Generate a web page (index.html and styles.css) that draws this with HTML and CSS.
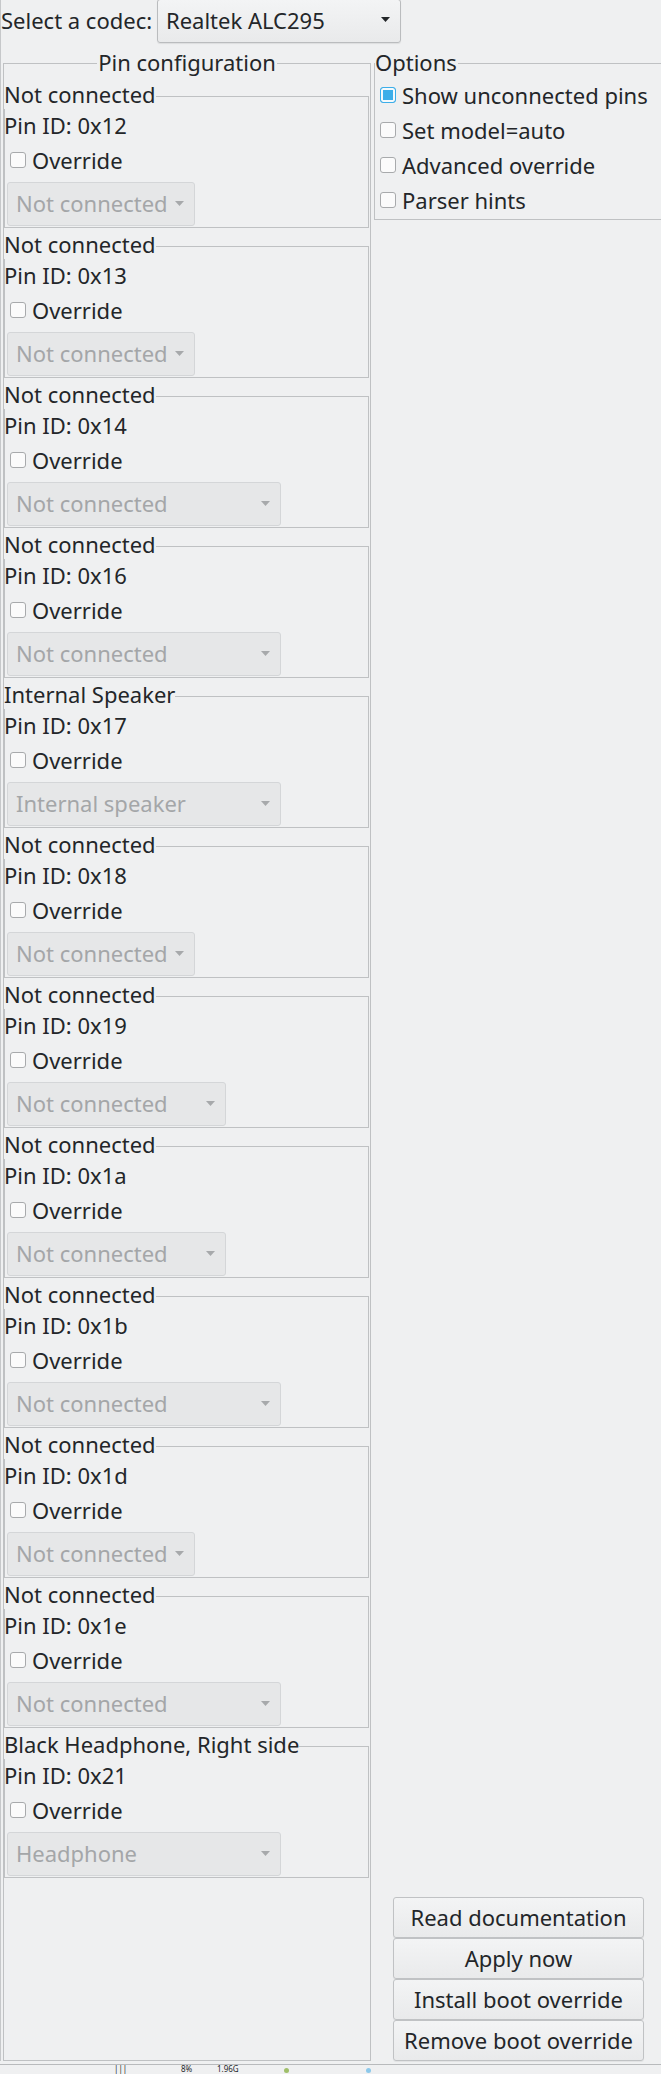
FILE: index.html
```html
<!DOCTYPE html>
<html>
<head>
<meta charset="utf-8">
<link rel="stylesheet" href="styles.css">
</head>
<body>
<div class="window">
  <div class="topbar">
    <span class="top-label">Select a codec:</span>
    <div class="combo">
      <span>Realtek ALC295</span>
      <svg class="arrow" width="9" height="5" viewBox="0 0 9 5"><path d="M0 0H9L4.5 5Z" fill="#232629"/></svg>
    </div>
  </div>
  <div class="main">
    <div class="pins">
      <div class="pins-title">Pin configuration</div>

      <div class="group">
        <div class="group-title">Not connected</div>
        <div class="pin-id">Pin ID: 0x12</div>
        <div class="override"><span class="cb"></span>Override</div>
        <div class="dcombo w-narrow"><span>Not connected</span><svg class="arrow" width="9" height="5" viewBox="0 0 9 5"><path d="M0 0H9L4.5 5Z" fill="#a7a9ab"/></svg></div>
      </div>

      <div class="group">
        <div class="group-title">Not connected</div>
        <div class="pin-id">Pin ID: 0x13</div>
        <div class="override"><span class="cb"></span>Override</div>
        <div class="dcombo w-narrow"><span>Not connected</span><svg class="arrow" width="9" height="5" viewBox="0 0 9 5"><path d="M0 0H9L4.5 5Z" fill="#a7a9ab"/></svg></div>
      </div>

      <div class="group">
        <div class="group-title">Not connected</div>
        <div class="pin-id">Pin ID: 0x14</div>
        <div class="override"><span class="cb"></span>Override</div>
        <div class="dcombo w-wide"><span>Not connected</span><svg class="arrow" width="9" height="5" viewBox="0 0 9 5"><path d="M0 0H9L4.5 5Z" fill="#a7a9ab"/></svg></div>
      </div>

      <div class="group">
        <div class="group-title">Not connected</div>
        <div class="pin-id">Pin ID: 0x16</div>
        <div class="override"><span class="cb"></span>Override</div>
        <div class="dcombo w-wide"><span>Not connected</span><svg class="arrow" width="9" height="5" viewBox="0 0 9 5"><path d="M0 0H9L4.5 5Z" fill="#a7a9ab"/></svg></div>
      </div>

      <div class="group">
        <div class="group-title">Internal Speaker</div>
        <div class="pin-id">Pin ID: 0x17</div>
        <div class="override"><span class="cb"></span>Override</div>
        <div class="dcombo w-wide"><span>Internal speaker</span><svg class="arrow" width="9" height="5" viewBox="0 0 9 5"><path d="M0 0H9L4.5 5Z" fill="#a7a9ab"/></svg></div>
      </div>

      <div class="group">
        <div class="group-title">Not connected</div>
        <div class="pin-id">Pin ID: 0x18</div>
        <div class="override"><span class="cb"></span>Override</div>
        <div class="dcombo w-narrow"><span>Not connected</span><svg class="arrow" width="9" height="5" viewBox="0 0 9 5"><path d="M0 0H9L4.5 5Z" fill="#a7a9ab"/></svg></div>
      </div>

      <div class="group">
        <div class="group-title">Not connected</div>
        <div class="pin-id">Pin ID: 0x19</div>
        <div class="override"><span class="cb"></span>Override</div>
        <div class="dcombo w-mid"><span>Not connected</span><svg class="arrow" width="9" height="5" viewBox="0 0 9 5"><path d="M0 0H9L4.5 5Z" fill="#a7a9ab"/></svg></div>
      </div>

      <div class="group">
        <div class="group-title">Not connected</div>
        <div class="pin-id">Pin ID: 0x1a</div>
        <div class="override"><span class="cb"></span>Override</div>
        <div class="dcombo w-mid"><span>Not connected</span><svg class="arrow" width="9" height="5" viewBox="0 0 9 5"><path d="M0 0H9L4.5 5Z" fill="#a7a9ab"/></svg></div>
      </div>

      <div class="group">
        <div class="group-title">Not connected</div>
        <div class="pin-id">Pin ID: 0x1b</div>
        <div class="override"><span class="cb"></span>Override</div>
        <div class="dcombo w-wide"><span>Not connected</span><svg class="arrow" width="9" height="5" viewBox="0 0 9 5"><path d="M0 0H9L4.5 5Z" fill="#a7a9ab"/></svg></div>
      </div>

      <div class="group">
        <div class="group-title">Not connected</div>
        <div class="pin-id">Pin ID: 0x1d</div>
        <div class="override"><span class="cb"></span>Override</div>
        <div class="dcombo w-narrow"><span>Not connected</span><svg class="arrow" width="9" height="5" viewBox="0 0 9 5"><path d="M0 0H9L4.5 5Z" fill="#a7a9ab"/></svg></div>
      </div>

      <div class="group">
        <div class="group-title">Not connected</div>
        <div class="pin-id">Pin ID: 0x1e</div>
        <div class="override"><span class="cb"></span>Override</div>
        <div class="dcombo w-wide"><span>Not connected</span><svg class="arrow" width="9" height="5" viewBox="0 0 9 5"><path d="M0 0H9L4.5 5Z" fill="#a7a9ab"/></svg></div>
      </div>

      <div class="group">
        <div class="group-title">Black Headphone, Right side</div>
        <div class="pin-id">Pin ID: 0x21</div>
        <div class="override"><span class="cb"></span>Override</div>
        <div class="dcombo w-wide"><span>Headphone</span><svg class="arrow" width="9" height="5" viewBox="0 0 9 5"><path d="M0 0H9L4.5 5Z" fill="#a7a9ab"/></svg></div>
      </div>
    </div>

    <div class="right">
      <div class="options">
        <div class="options-title">Options</div>
        <div class="opt first"><span class="cb checked"></span>Show unconnected pins</div>
        <div class="opt"><span class="cb"></span>Set model=auto</div>
        <div class="opt"><span class="cb"></span>Advanced override</div>
        <div class="opt"><span class="cb"></span>Parser hints</div>
      </div>
      <div class="buttons">
        <div class="btn">Read documentation</div>
        <div class="btn">Apply now</div>
        <div class="btn">Install boot override</div>
        <div class="btn">Remove boot override</div>
      </div>
    </div>
  </div>
</div>
<div class="status">
  <span class="st st-bars">|||</span>
  <span class="st st-cpu">8%</span>
  <span class="st st-mem">1.96G</span>
  <span class="dot dot-green"></span>
  <span class="dot dot-blue"></span>
</div>
</body>
</html>
```
FILE: styles.css
```css
html, body {
  margin: 0;
  padding: 0;
}
body {
  background: #eff0f1;
  color: #232629;
  font-family: "Noto Sans", "DejaVu Sans", sans-serif;
  font-size: 22px;
  line-height: 30px;
  width: 661px;
  height: 2074px;
  overflow: hidden;
}
.window {
  height: 2061px;
  border-left: 1px solid #c6c8ca;
  box-sizing: border-box;
}
.topbar {
  display: flex;
  align-items: center;
  height: 43px;
}
.top-label {
  width: 156px;
  flex: none;
  white-space: nowrap;
  padding-bottom: 3px;
}
.combo {
  box-sizing: border-box;
  width: 244px;
  height: 44px;
  margin-top: -2px;
  padding: 0 10px 2px 8px;
  display: flex;
  align-items: center;
  justify-content: space-between;
  border: 1px solid #babcbe;
  border-radius: 3px;
  background: linear-gradient(#f3f4f5, #e9eaeb);
  box-shadow: 0 1px 1px rgba(0, 0, 0, 0.08);
}
.arrow {
  display: block;
  flex: none;
}
.main {
  display: flex;
  margin-top: 20px;
}
.pins {
  box-sizing: border-box;
  margin-left: 2px;
  width: 368px;
  height: 1998px;
  flex: none;
  border: 1px solid #bfc1c3;
  display: flex;
  flex-direction: column;
}
.pins-title {
  align-self: center;
  margin-top: -17px;
  padding: 0 1px;
  background: #eff0f1;
  white-space: nowrap;
}
.group {
  margin: 18px 1px 0 0;
  border: 1px solid #bfc1c3;
  padding-bottom: 1px;
  display: flex;
  flex-direction: column;
  align-items: flex-start;
}
.pins-title + .group {
  margin-top: 19px;
}
.group-title {
  margin-top: -18px;
  margin-left: -1px;
  background: #eff0f1;
  white-space: nowrap;
}
.pin-id {
  margin-top: 1px;
  margin-left: -1px;
  white-space: nowrap;
}
.override {
  margin-top: 5px;
  height: 30px;
  padding-left: 5px;
  display: flex;
  align-items: center;
}
.cb {
  display: block;
  flex: none;
  box-sizing: border-box;
  width: 16px;
  height: 16px;
  margin-right: 6px;
  border: 1px solid #a8aaac;
  border-radius: 3px;
  background: #fbfbfb;
}
.cb.checked {
  border-color: #3daee9;
  background: #3daee9;
  box-shadow: inset 0 0 0 2px #f4fafd;
}
.dcombo {
  box-sizing: border-box;
  margin-top: 7px;
  margin-left: 2px;
  height: 44px;
  padding: 0 10px 2px 8px;
  display: flex;
  align-items: center;
  justify-content: space-between;
  border: 1px solid #d4d6d8;
  border-radius: 3px;
  background: #e6e7e8;
  color: #a4a6a8;
  white-space: nowrap;
}
.w-narrow { width: 188px; }
.w-mid { width: 219px; }
.w-wide { width: 274px; }

.right {
  flex: none;
  width: 288px;
  margin-left: 3px;
  display: flex;
  flex-direction: column;
}
.options {
  border: 1px solid #bfc1c3;
  padding-bottom: 4px;
  display: flex;
  flex-direction: column;
  align-items: flex-start;
}
.options-title {
  margin-top: -17px;
  background: #eff0f1;
  padding-right: 1px;
}
.opt {
  display: flex;
  align-items: center;
  height: 30px;
  margin-top: 5px;
  padding-left: 5px;
  white-space: nowrap;
}
.opt.first {
  margin-top: 3px;
}
.buttons {
  margin-top: auto;
  margin-left: 19px;
  width: 251px;
  display: flex;
  flex-direction: column;
}
.btn {
  box-sizing: border-box;
  height: 41px;
  padding-bottom: 2px;
  border: 1px solid #c0c2c4;
  border-radius: 3px;
  background: linear-gradient(#f3f4f5, #e9eaeb);
  box-shadow: 0 1px 1px rgba(0, 0, 0, 0.06);
  display: flex;
  align-items: center;
  justify-content: center;
  white-space: nowrap;
}
.status {
  margin-top: 3px;
  border-top: 1px solid #b8babc;
  height: 9px;
  position: relative;
  font-size: 8px;
  line-height: 8px;
  color: #232629;
}
.st {
  position: absolute;
  top: 0;
}
.st-bars { left: 114px; }
.st-cpu { left: 181px; }
.st-mem { left: 217px; }
.dot {
  position: absolute;
  top: 3px;
  width: 5px;
  height: 5px;
  border-radius: 50%;
}
.dot-green { left: 284px; background: #9fbf6a; }
.dot-blue { left: 366px; background: #8cc8ea; }
```
